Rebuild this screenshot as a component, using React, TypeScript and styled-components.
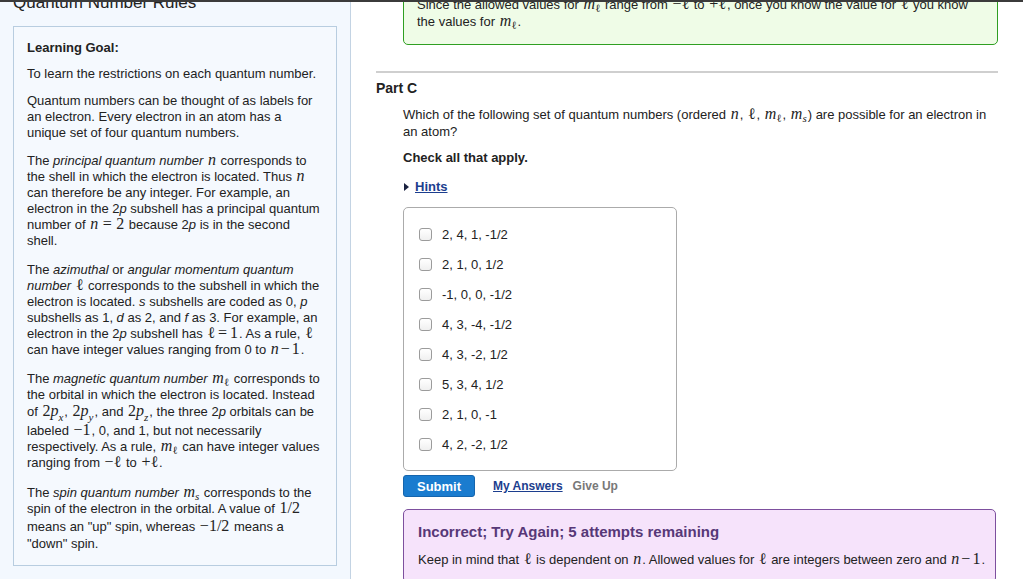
import React from "react";
import styled, { createGlobalStyle } from "styled-components";

const GlobalStyle = createGlobalStyle`
  html, body {
    margin: 0;
    padding: 0;
    background: #ffffff;
  }
  body {
    font-family: "Liberation Sans", Arial, sans-serif;
    font-size: 13px;
    color: #222222;
  }
  * {
    box-sizing: border-box;
  }
`;

// dark edge of the browser chrome, the page scrolls under it
const TopEdge = styled.div`
  position: fixed;
  top: 0;
  left: 0;
  right: 0;
  height: 2px;
  background: #3b3b3b;
  z-index: 10;
`;

const Viewport = styled.div`
  height: 579px;
  overflow: hidden;
`;

const Page = styled.div`
  display: flex;
  margin-top: -20px;
  min-height: 620px;
`;

/* ---------- left: introduction panel ---------- */

const Sidebar = styled.aside`
  flex: none;
  width: 351px;
  background: #f3f8fe;
  border-right: 1px solid #c3d3e3;
  padding: 13px 13px 0 13px;
`;

const Title = styled.h1`
  margin: 0;
  font-size: 17px;
  line-height: 20px;
  font-weight: normal;
  color: #222;
`;

const IntroBox = styled.div`
  margin-top: 13px;
  border: 1px solid #b8cde0;
  background: #f5f9fe;
  padding: 13px 13px 0 13px;
`;

const Para = styled.p<{ $gap?: number }>`
  margin: 0 0 ${(p) => (p.$gap ?? 13)}px 0;
  line-height: 16px;
`;

/* ---------- math-ish inline text ---------- */

const Math = styled.span<{ $size?: "low" | "high" }>`
  font-family: "Liberation Serif", "DejaVu Serif", serif;
  font-size: 16px;
  line-height: ${(p) => (p.$size === "high" ? "16px" : "13px")};
  font-style: normal;
  white-space: nowrap;
  padding: 0 1px;
  ${(p) => (p.$size === "low" ? "display: inline-block; padding-bottom: 4.5px;" : "")}
`;

const Var = styled.i`
  font-style: italic;
`;

const Op = styled.span<{ $space: number }>`
  margin: 0 ${(p) => p.$space}px;
`;

const Sub = styled.sub<{ $raise?: boolean }>`
  font-size: 11px;
  line-height: ${(p) => (p.$raise ? "normal" : "0")};
  vertical-align: ${(p) => (p.$raise ? "-5px" : "-3px")};
`;

/* ---------- right: question part ---------- */

const Main = styled.main`
  flex: 1;
  padding: 0 25px;
`;

const HintBox = styled.div`
  margin: 3px 0 0 27px;
  border: 1px solid #2f9f22;
  border-radius: 5px;
  background: #effce7;
  padding: 12px 13px 14px 13px;
  line-height: 17px;
`;

const Divider = styled.hr`
  margin: 26px 0 0 0;
  border: none;
  height: 2px;
  background: #cfcfcf;
`;

const PartTitle = styled.h2`
  margin: 7px 0 0 0;
  font-size: 14px;
  line-height: 16px;
  font-weight: bold;
  color: #222;
`;

const PartBody = styled.div`
  margin-left: 27px;
`;

const Question = styled.p`
  margin: 10px 0 0 0;
  line-height: 17px;
`;

const Instruction = styled.p`
  margin: 10px 0 0 0;
  line-height: 16px;
  font-weight: bold;
`;

const HintsToggle = styled.div`
  margin-top: 13px;
  display: flex;
  align-items: center;
  gap: 6px;
  line-height: 16px;
  padding-left: 1px;
`;

const Link = styled.a<{ $muted?: boolean; $small?: boolean }>`
  font-weight: bold;
  font-size: ${(p) => (p.$small ? "12px" : "13px")};
  color: ${(p) => (p.$muted ? "#787878" : "#1c3e8e")};
  text-decoration: ${(p) => (p.$muted ? "none" : "underline")};
  cursor: pointer;
`;

const OptionsBox = styled.div`
  margin-top: 12px;
  width: 274px;
  border: 1px solid #ababab;
  border-radius: 5px;
  padding: 11px 15px;
`;

const Option = styled.label`
  display: flex;
  align-items: center;
  gap: 10px;
  height: 30px;
`;

const Check = styled.input`
  appearance: none;
  margin: 0;
  width: 13px;
  height: 13px;
  border: 1px solid #9b9b9b;
  border-radius: 3px;
  background: linear-gradient(#ffffff, #f0f0f0);
  flex: none;
`;

const Actions = styled.div`
  margin-top: 4px;
  display: flex;
  align-items: center;
`;

const SubmitButton = styled.button`
  width: 72px;
  height: 22px;
  border: 1px solid #1565ad;
  border-radius: 3px;
  background: #1a7ccf;
  color: #ffffff;
  font-family: "Liberation Sans", Arial, sans-serif;
  font-size: 13px;
  font-weight: bold;
  padding: 0;
  margin-right: 18px;
`;

const ActionLinks = styled.div`
  display: flex;
  gap: 10px;
`;

const Feedback = styled.div`
  margin: 12px 2px 0 0;
  border: 1px solid #7d4f9e;
  border-radius: 5px;
  background: #f6e3fb;
  padding: 13px 8px 14px 14px;
`;

const FeedbackTitle = styled.div`
  font-size: 15px;
  line-height: 18px;
  font-weight: bold;
  color: #573878;
`;

const FeedbackText = styled.p`
  margin: 11px 0 0 0;
  line-height: 16px;
`;

const Caret = () => (
  <svg width="5" height="8" viewBox="0 0 5 8">
    <polygon points="0,0 5,4 0,8" fill="#1a2240" />
  </svg>
);

const ell = "\u2113";
const minus = "\u2212";

const ML = () => (
  <Math>
    <Var>m</Var>
    <Sub>{ell}</Sub>
  </Math>
);

const MS = () => (
  <Math>
    <Var>m</Var>
    <Sub>
      <Var>s</Var>
    </Sub>
  </Math>
);

const N = () => (
  <Math>
    <Var>n</Var>
  </Math>
);

const L = () => <Math>{ell}</Math>;

const NMinusOne = () => (
  <Math>
    <Var>n</Var>
    <Op $space={2}>{minus}</Op>1
  </Math>
);

const TwoP = ({ axis }: { axis: string }) => (
  <Math $size="high">
    2<Var>p</Var>
    <Sub $raise>
      <Var>{axis}</Var>
    </Sub>
  </Math>
);

const options = [
  "2, 4, 1, -1/2",
  "2, 1, 0, 1/2",
  "-1, 0, 0, -1/2",
  "4, 3, -4, -1/2",
  "4, 3, -2, 1/2",
  "5, 3, 4, 1/2",
  "2, 1, 0, -1",
  "4, 2, -2, 1/2",
];

export default function App() {
  return (
    <>
      <GlobalStyle />
      <TopEdge />
      <Viewport>
        <Page>
          <Sidebar>
            <Title>Quantum Number Rules</Title>
            <IntroBox>
              <Para $gap={10}>
                <b>Learning Goal:</b>
              </Para>
              <Para $gap={11}>To learn the restrictions on each quantum number.</Para>
              <Para $gap={12}>
                Quantum numbers can be thought of as labels for an electron. Every electron in an
                atom has a unique set of four quantum numbers.
              </Para>
              <Para>
                The <i>principal quantum number</i> <N /> corresponds to the shell in which the
                electron is located. Thus <N /> can therefore be any integer. For example, an
                electron in the 2<i>p</i> subshell has a principal quantum number of{" "}
                <Math>
                  <Var>n</Var>
                  <Op $space={4.5}>=</Op>2
                </Math>{" "}
                because 2<i>p</i> is in the second shell.
              </Para>
              <Para>
                The <i>azimuthal</i> or <i>angular momentum quantum number</i> <L /> corresponds
                to the subshell in which the electron is located. <i>s</i> subshells are coded as
                0, <i>p</i> subshells as 1, <i>d</i> as 2, and <i>f</i> as 3. For example, an
                electron in the 2<i>p</i> subshell has{" "}
                <Math>
                  {ell}
                  <Op $space={3}>=</Op>1
                </Math>
                . As a rule, <L /> can have integer values ranging from 0 to <NMinusOne />.
              </Para>
              <Para $gap={14}>
                The <i>magnetic quantum number</i> <ML /> corresponds to the orbital in which the
                electron is located. Instead of <TwoP axis="x" />, <TwoP axis="y" />, and{" "}
                <TwoP axis="z" />, the three 2<i>p</i> orbitals can be labeled{" "}
                <Math>{minus}1</Math>, 0, and 1, but not necessarily respectively. As a rule,{" "}
                <ML /> can have integer values ranging from <Math>{minus + ell}</Math> to{" "}
                <Math>+{ell}</Math>.
              </Para>
              <Para>
                The <i>spin quantum number</i> <MS /> corresponds to the spin of the electron in
                the orbital. A value of <Math $size="low">1/2</Math> means an "up" spin, whereas{" "}
                <Math $size="low">{minus}1/2</Math> means a "down" spin.
              </Para>
            </IntroBox>
          </Sidebar>

          <Main>
            <HintBox>
              Since the allowed values for <ML /> range from <Math>{minus + ell}</Math> to{" "}
              <Math>+{ell}</Math>, once you know the value for <L /> you know the values for{" "}
              <ML />.
            </HintBox>

            <Divider />
            <PartTitle>Part C</PartTitle>

            <PartBody>
              <Question>
                Which of the following set of quantum numbers (ordered <N />, <L />, <ML />,{" "}
                <MS />) are possible for an electron in an atom?
              </Question>
              <Instruction>Check all that apply.</Instruction>

              <HintsToggle>
                <Caret />
                <Link>Hints</Link>
              </HintsToggle>

              <OptionsBox>
                {options.map((o) => (
                  <Option key={o}>
                    <Check type="checkbox" />
                    {o}
                  </Option>
                ))}
              </OptionsBox>

              <Actions>
                <SubmitButton>Submit</SubmitButton>
                <ActionLinks>
                  <Link $small>My Answers</Link>
                  <Link $small $muted>
                    Give Up
                  </Link>
                </ActionLinks>
              </Actions>

              <Feedback>
                <FeedbackTitle>Incorrect; Try Again; 5 attempts remaining</FeedbackTitle>
                <FeedbackText>
                  Keep in mind that <L /> is dependent on <N />. Allowed values for <L /> are
                  integers between zero and <NMinusOne />.
                </FeedbackText>
              </Feedback>
            </PartBody>
          </Main>
        </Page>
      </Viewport>
    </>
  );
}
